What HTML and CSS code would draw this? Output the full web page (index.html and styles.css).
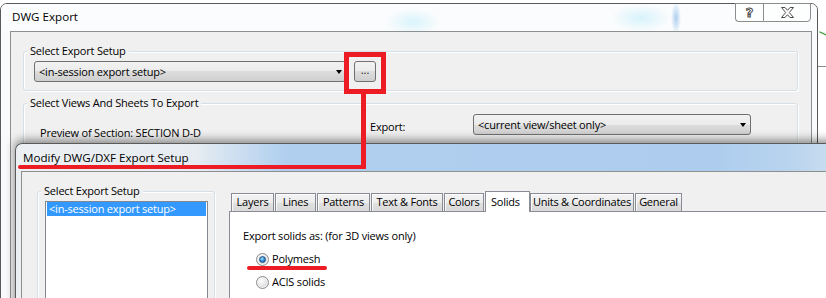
FILE: index.html
```html
<!DOCTYPE html>
<html>
<head>
<meta charset="utf-8">
<link rel="stylesheet" href="styles.css">
</head>
<body>
<div class="desk">
  <div class="bg-line"></div>
  <div class="bg-diag"></div>

  <div class="win win-export">
    <div class="titlebar titlebar-export">
      <span class="title">DWG Export</span>
      <div class="capbtns">
        <span class="cb cb-help">?</span>
        <span class="cb cb-close">
          <svg width="13" height="11" viewBox="0 0 13 11"><path d="M0.5 0.5h3.5l2.5 2.8l2.5-2.8h3.5l-4.2 5l4.2 5h-3.5l-2.5-2.8l-2.5 2.8h-3.5l4.2-5z" fill="#fff" stroke="#4a4a4a" stroke-width="1" stroke-linejoin="round"/></svg>
        </span>
      </div>
    </div>
    <div class="client client-export">
      <div class="grp grp-setup">
        <span class="grp-label">Select Export Setup</span>
        <div class="setup-row">
          <div class="combo combo-setup"><span>&lt;in-session export setup&gt;</span><i class="arrow"></i></div>
          <button class="btn-dots">...</button>
        </div>
      </div>
      <div class="grp grp-views">
        <span class="grp-label">Select Views And Sheets To Export</span>
        <div class="views-row">
          <div class="preview">Preview of Section: SECTION D-D</div>
          <div class="export-lbl">Export:</div>
          <div class="combo combo-views"><span>&lt;current view/sheet only&gt;</span><i class="arrow"></i></div>
        </div>
      </div>
    </div>
  </div>

  <div class="win win-modify">
    <div class="titlebar titlebar-modify">
      <span class="title">Modify DWG/DXF Export Setup</span>
    </div>
    <div class="client client-modify">
      <div class="grp grp-list">
        <span class="grp-label">Select Export Setup</span>
        <div class="listbox">
          <div class="list-item selected">&lt;in-session export setup&gt;</div>
        </div>
      </div>
      <div class="tabctl">
        <div class="tabstrip">
          <span class="tab w-layers">Layers</span>
          <span class="tab w-lines">Lines</span>
          <span class="tab w-patterns">Patterns</span>
          <span class="tab w-text">Text &amp; Fonts</span>
          <span class="tab w-colors">Colors</span>
          <span class="tab tab-active w-solids">Solids</span>
          <span class="tab w-units">Units &amp; Coordinates</span>
          <span class="tab w-general">General</span>
        </div>
        <div class="tabpanel">
          <div class="panel-text">Export solids as: (for 3D views only)</div>
          <label class="radio-row"><span class="radio checked"></span><span>Polymesh</span></label>
          <label class="radio-row"><span class="radio"></span><span>ACIS solids</span></label>
        </div>
      </div>
    </div>
  </div>

  <div class="annot red-box"></div>
  <div class="annot red-vline"></div>
  <div class="annot red-hline"></div>
  <div class="annot red-uline"></div>
</div>
</body>
</html>
```

FILE: styles.css
```css
html, body {
  margin: 0;
  padding: 0;
  background: #ffffff;
  overflow: hidden;
}

.desk {
  position: relative;
  width: 826px;
  height: 298px;
  overflow: hidden;
  font-family: "Open Sans", "Noto Sans", sans-serif;
  font-size: 11px;
  letter-spacing: -0.2px;
  color: #000;
  background: #fff;
}

.bg-line {
  position: absolute;
  left: 818px;
  top: 66px;
  width: 10px;
  height: 1px;
  background: #8a8a8a;
}

.bg-diag {
  position: absolute;
  left: 819px;
  top: 33px;
  width: 8px;
  height: 1px;
  background: #2a9a2a;
  transform: rotate(25deg);
}

/* ---------- windows ---------- */
.win {
  position: absolute;
  box-sizing: border-box;
  border: 1px solid #5a5a5a;
  display: flex;
  flex-direction: column;
}

.win-export {
  left: 0;
  top: 3px;
  width: 818px;
  height: 330px;
  border-radius: 7px 7px 0 0;
  background: #f9fafb;
}

.titlebar {
  display: flex;
  align-items: flex-start;
  height: 27px;
  flex: none;
  position: relative;
}

.titlebar-export {
  background:
    radial-gradient(ellipse 5px 16px at 675px 14px, rgba(110,170,225,0.55), rgba(110,170,225,0) 100%),
    radial-gradient(ellipse 30px 14px at 640px 14px, rgba(185,235,250,0.55), rgba(185,235,250,0) 100%),
    radial-gradient(ellipse 28px 14px at 412px 18px, rgba(190,238,250,0.55), rgba(190,238,250,0) 100%),
    #fbfcfd;
  border-radius: 6px 6px 0 0;
}

.title {
  font-size: 11.6px;
  letter-spacing: 0;
  line-height: 16px;
  padding: 5px 0 0 11px;
  color: #000;
}

.capbtns {
  margin-left: auto;
  margin-right: 6px;
  display: flex;
  margin-top: -1px;
}

.cb {
  box-sizing: border-box;
  height: 19px;
  border: 1px solid #8c8c8c;
  display: flex;
  align-items: center;
  justify-content: center;
  background: rgba(255,255,255,0.6);
}

.cb-help {
  width: 28px;
  border-right: none;
  border-radius: 0 0 0 4px;
  font-family: "DejaVu Sans", sans-serif;
  font-weight: bold;
  font-size: 13px;
  color: #fff;
  -webkit-text-stroke: 1px #4a4a4a;
  line-height: 17px;
}

.cb-close {
  width: 48px;
  border-radius: 0 0 4px 0;
}

.client {
  box-sizing: border-box;
  border: 1px solid #8e8f8f;
  background: #f0f0f0;
  flex: 1;
}

.client-export {
  margin: 0 5px 0 9px;
  padding: 19px 13px 0 12px;
}

/* ---------- group boxes ---------- */
.grp {
  border: 1px solid #d5dfe5;
  border-radius: 3px;
  box-shadow: inset 1px 1px 0 #fff, 1px 1px 0 #fff;
}

.grp-label {
  display: block;
  width: max-content;
  margin: -9px 0 0 -7px;
  padding: 0 3px;
  line-height: 16px;
  background: #f0f0f0;
}

.grp-setup {
  padding: 0 10px 8px 10px;
}

.setup-row {
  display: flex;
  align-items: center;
  margin-top: 2px;
}

.combo {
  box-sizing: border-box;
  height: 21px;
  border: 1px solid #707070;
  border-radius: 3px;
  background: linear-gradient(#f2f2f2 0, #ebebeb 50%, #dddddd 50%, #cfcfcf 100%);
  display: flex;
  align-items: center;
  justify-content: space-between;
  padding: 0 3px 0 4px;
  line-height: 16px;
}

.combo-setup {
  width: 312px;
}

.arrow {
  width: 0;
  height: 0;
  border-left: 3.5px solid transparent;
  border-right: 3.5px solid transparent;
  border-top: 4px solid #000;
  margin-top: 1px;
}

.btn-dots {
  box-sizing: border-box;
  width: 22px;
  height: 21px;
  margin-left: 8px;
  padding: 0 0 3px 0;
  border: 1px solid #707070;
  border-radius: 3px;
  background: linear-gradient(#f2f2f2 0, #ebebeb 50%, #dddddd 50%, #cfcfcf 100%);
  font-family: "Open Sans", sans-serif;
  font-size: 11px;
  line-height: 14px;
  color: #222;
}

.grp-views {
  margin-top: 12px;
  padding: 0 10px 20px 10px;
}

.views-row {
  display: grid;
  grid-template-columns: 330px 103px 278px;
  margin-top: 3px;
  padding-left: 6px;
}

.preview {
  padding-top: 11px;
  line-height: 16px;
}

.export-lbl {
  padding-top: 5px;
  line-height: 16px;
}

.combo-views {
  padding-right: 4px;
}

/* ---------- modify window ---------- */
.win-modify {
  left: 15px;
  top: 143px;
  width: 830px;
  height: 200px;
  border-right: none;
  border-bottom: none;
  border-radius: 7px 0 0 0;
  background: linear-gradient(to right, #edf0f3 0, #e6ecf2 180px, #b0cfef 270px, #aecdee 700px, #b8d3ee 770px, #c7dcef 811px);
  box-shadow: 0 -3px 10px rgba(0,0,0,0.45);
}

.titlebar-modify {
  height: 27px;
}

.titlebar-modify .title {
  padding: 6px 0 0 7px;
}

.client-modify {
  margin-left: 5px;
  border-right: none;
  border-bottom: none;
  display: flex;
  align-items: flex-start;
  padding: 19px 0 0 15px;
}

.grp-list {
  box-sizing: border-box;
  width: 178px;
  height: 140px;
  padding: 0 6px 0 7px;
}

.grp-list .grp-label {
  margin-left: -4px;
}

.listbox {
  margin-top: 2px;
  height: 120px;
  border: 1px solid #828790;
  background: #fff;
  padding: 0 1px;
}

.list-item {
  height: 14px;
  line-height: 14px;
  padding-left: 2px;
}

.list-item.selected {
  background: #3399ff;
  color: #fff;
}

.tabctl {
  margin-left: 14px;
  flex: 1;
  display: flex;
  flex-direction: column;
}

.tabstrip {
  display: flex;
  align-items: flex-end;
  height: 20px;
  padding-left: 2px;
  gap: 1px;
  position: relative;
  z-index: 1;
}

.tab {
  box-sizing: border-box;
  height: 18px;
  border: 1px solid #898c95;
  border-bottom: none;
  background: linear-gradient(#f3f3f3 0, #ececec 50%, #e0e0e0 50%, #d9d9d9 100%);
  box-shadow: inset 1px 1px 0 rgba(255,255,255,0.8);
  text-align: center;
  line-height: 16px;
  white-space: nowrap;
  letter-spacing: -0.25px;
}

.tab-active {
  height: 21px;
  margin-bottom: -1px;
  margin-right: -1px;
  background: #fff;
  box-shadow: none;
  text-align: left;
  padding-left: 5px;
  line-height: 20px;
}

.w-layers { width: 43px; }
.w-lines { width: 41px; }
.w-patterns { width: 53px; }
.w-text { width: 72px; }
.w-colors { width: 40px; }
.w-solids { width: 45px; }
.w-units { width: 104px; }
.w-general { width: 47px; }

.tabpanel {
  border: 1px solid #898c95;
  border-right: none;
  background: #fff;
  height: 120px;
  padding: 16px 0 0 13px;
}

.panel-text {
  line-height: 16px;
}

.radio-row {
  display: flex;
  align-items: center;
  gap: 3px;
  margin-top: 7px;
  padding-left: 13px;
  line-height: 16px;
}

.radio {
  box-sizing: border-box;
  width: 13px;
  height: 13px;
  border-radius: 50%;
  border: 1px solid #8a8a8a;
  background: radial-gradient(circle at 40% 35%, #ffffff 0, #e8e8e8 45%, #c9c9c9 100%);
  display: flex;
  align-items: center;
  justify-content: center;
  box-shadow: inset 0 0 0 1px #f4f4f4;
}

.radio.checked::after {
  content: "";
  width: 7px;
  height: 7px;
  box-sizing: border-box;
  border-radius: 50%;
  border: 1px solid #1c5180;
  background: radial-gradient(circle at 40% 35%, #9fe0ff 0, #2d8ad6 55%, #0b4f93 100%);
}

/* ---------- annotations ---------- */
.annot {
  position: absolute;
  z-index: 10;
}

.red-box {
  left: 344px;
  top: 52px;
  width: 42px;
  height: 42px;
  box-sizing: border-box;
  border: 5px solid #ed1c24;
}

.red-vline {
  left: 361px;
  top: 93px;
  width: 5px;
  height: 76px;
  background: #ed1c24;
}

.red-hline {
  left: 18px;
  top: 165px;
  width: 348px;
  height: 4px;
  border-radius: 2px 0 0 2px;
  background: #ed1c24;
}

.red-uline {
  left: 247px;
  top: 266px;
  width: 80px;
  height: 4px;
  border-radius: 2px;
  background: #ed1c24;
}
```
